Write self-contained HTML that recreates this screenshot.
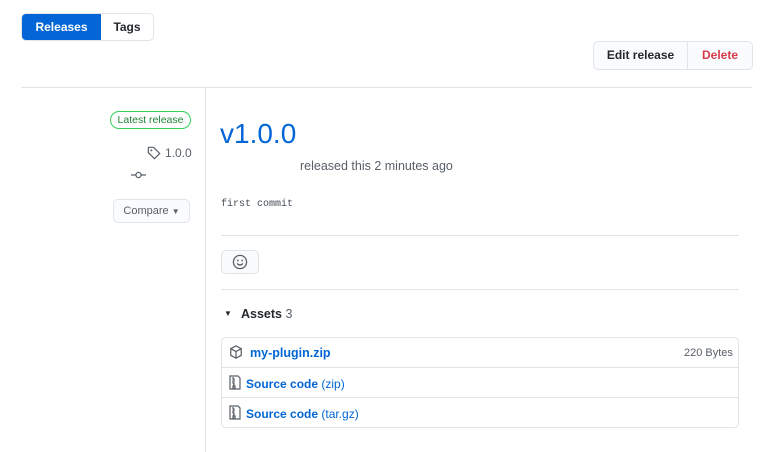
<!DOCTYPE html>
<html><head><style>
*{margin:0;padding:0;box-sizing:border-box}
body{width:768px;height:452px;background:#fff;font-family:"Liberation Sans",sans-serif;color:#24292e;position:relative;overflow:hidden;font-size:12px}
.a{position:absolute}
.btn{border:1px solid #e1e4e8;background:#fafbfc;border-radius:5px}
</style></head><body>
<div class="a" style="left:21px;top:13px;width:133px;height:28px;border:1px solid #e1e4e8;border-radius:5px;overflow:hidden;display:flex">
<div style="width:79px;background:#0366d6;color:#fff;font-weight:bold;font-size:12px;line-height:26px;text-align:center">Releases</div>
<div style="flex:1;font-weight:bold;line-height:26px;text-align:center;color:#24292e">Tags</div>
</div>
<div class="a btn" style="left:593px;top:41px;width:160px;height:29px;display:flex;font-weight:bold;line-height:27px">
<div style="width:94px;text-align:center;border-right:1px solid #e1e4e8">Edit release</div>
<div style="flex:1;text-align:center;color:#d73a49">Delete</div>
</div>
<div class="a" style="left:21px;top:87px;width:731px;height:1px;background:#e1e4e8"></div>
<div class="a" style="left:205px;top:88px;width:1px;height:364px;background:#e1e4e8"></div>
<div class="a" style="left:110px;top:111px;width:81px;height:18px;border:1px solid #34d058;border-radius:10px;color:#22863a;font-size:10.5px;line-height:16px;text-align:center">Latest release</div>
<svg class="a" style="left:147px;top:146px" width="14" height="14" viewBox="0 0 16 16"><path fill="none" stroke="#586069" stroke-width="1.4" d="M1.5 2.5v5l7 7 6-6-7-7h-5.5z"/><circle cx="5" cy="5" r="1.2" fill="#586069"/></svg>
<div class="a" style="left:165px;top:146px;color:#586069;font-size:12px">1.0.0</div>
<svg class="a" style="left:131px;top:170px" width="15" height="10" viewBox="0 0 15 10"><circle cx="7.5" cy="5" r="2.6" fill="none" stroke="#586069" stroke-width="1.3"/><path d="M0 5h4.9M10.1 5H15" stroke="#586069" stroke-width="1.3"/></svg>
<div class="a btn" style="left:113px;top:199px;width:77px;height:24px;color:#586069;font-size:11px;line-height:22px;text-align:center">Compare <span style="font-size:8px">▼</span></div>
<div class="a" style="left:220px;top:118px;font-size:28px;color:#0366d6">v1.0.0</div>
<div class="a" style="left:300px;top:159px;font-size:12.5px;color:#586069">released this 2 minutes ago</div>
<div class="a" style="left:221px;top:199px;font-family:'Liberation Mono',monospace;font-size:10px;color:#444d56">first commit</div>
<div class="a" style="left:221px;top:235px;width:518px;height:1px;background:#e1e4e8"></div>
<div class="a btn" style="left:221px;top:250px;width:38px;height:24px"></div>
<svg class="a" style="left:232px;top:254px" width="16" height="16" viewBox="0 0 16 16"><circle cx="8" cy="8" r="6.6" fill="none" stroke="#586069" stroke-width="1.3"/><circle cx="5.8" cy="6.5" r="0.9" fill="#586069"/><circle cx="10.2" cy="6.5" r="0.9" fill="#586069"/><path d="M5 9.5q3 3 6 0" fill="none" stroke="#586069" stroke-width="1.3"/></svg>
<div class="a" style="left:221px;top:289px;width:518px;height:1px;background:#e1e4e8"></div>
<div class="a" style="left:224px;top:309px;font-size:8px">▼</div>
<div class="a" style="left:241px;top:307px;font-size:12.5px;font-weight:bold">Assets <span style="font-weight:normal;color:#586069">3</span></div>
<div class="a" style="left:221px;top:337px;width:518px;height:91px;border:1px solid #e1e4e8;border-radius:5px"></div>
<div class="a" style="left:222px;top:367px;width:516px;height:1px;background:#e1e4e8"></div>
<div class="a" style="left:222px;top:397px;width:516px;height:1px;background:#e1e4e8"></div>
<svg class="a" style="left:229px;top:345px" width="14" height="14" viewBox="0 0 16 16"><path d="M8 1l6 3.2v7.6L8 15l-6-3.2V4.2z M2 4.2l6 3.3 6-3.3 M8 7.5V15" fill="none" stroke="#586069" stroke-width="1.4"/></svg>
<div class="a" style="left:250px;top:346px;font-size:12.5px;font-weight:bold;color:#0366d6">my-plugin.zip</div>
<div class="a" style="left:684px;top:347px;font-size:11px;color:#586069">220 Bytes</div>
<svg class="a" style="left:229px;top:375px" width="12" height="15" viewBox="0 0 12 15"><path d="M1 1h8l2 2v11H1z M4 2v2h1v2H4v2h1v2H4 M4 11h2v2H4z" fill="none" stroke="#586069" stroke-width="1.2"/></svg>
<div class="a" style="left:246px;top:377px;font-size:12px;color:#0366d6"><b>Source code</b> (zip)</div>
<svg class="a" style="left:229px;top:405px" width="12" height="15" viewBox="0 0 12 15"><path d="M1 1h8l2 2v11H1z M4 2v2h1v2H4v2h1v2H4 M4 11h2v2H4z" fill="none" stroke="#586069" stroke-width="1.2"/></svg>
<div class="a" style="left:246px;top:407px;font-size:12px;color:#0366d6"><b>Source code</b> (tar.gz)</div>
</body></html>
